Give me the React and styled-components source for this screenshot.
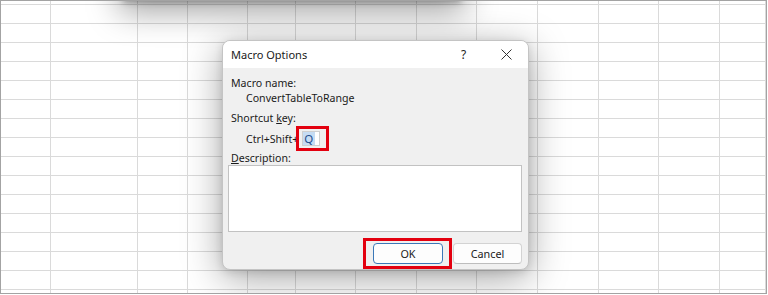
import React from 'react'
import styled, { createGlobalStyle } from 'styled-components'

const GlobalStyle = createGlobalStyle`
  html, body {
    margin: 0;
    padding: 0;
    background: #ffffff;
  }
  body {
    font-family: "Noto Sans", "Open Sans", sans-serif;
  }
`

const COLUMNS = [50, 87, 50, 60, 48, 60, 61, 60, 61, 61, 60, 61]
const ROWS = 17

const Frame = styled.div`
  position: relative;
  width: 767px;
  height: 294px;
  box-sizing: border-box;
  border: 1px solid #a3a3a3;
  overflow: hidden;
  background: #ffffff;
`

const Sheet = styled.div`
  display: grid;
  grid-template-columns: ${COLUMNS.map(w => w + 'px').join(' ')} 1fr;
  grid-template-rows: 4px repeat(${ROWS - 1}, 19px);
`

const Cell = styled.div`
  box-sizing: border-box;
  border-right: 1px solid #dadada;
  border-bottom: 1px solid #dadada;
`

// bottom edge of a window that sits above the visible area, only its shadow shows
const UpperWindow = styled.div`
  position: absolute;
  left: 122px;
  top: -62px;
  width: 338px;
  height: 61px;
  background: #8a8a8a;
  box-shadow: 0 8px 32px 4px rgba(0, 0, 0, 0.36), 0 2px 6px rgba(0, 0, 0, 0.3);
`

const Dialog = styled.div`
  position: absolute;
  left: 221px;
  top: 39px;
  width: 307px;
  height: 230px;
  box-sizing: border-box;
  display: flex;
  flex-direction: column;
  border: 1px solid #c4c4c4;
  border-radius: 8px;
  overflow: hidden;
  background: #f0f0f0;
  box-shadow: 0 8px 38px rgba(0, 0, 0, 0.36), 0 2px 8px rgba(0, 0, 0, 0.12);
  color: #1b1b1b;
  font-size: 10.6px;
`

const TitleBar = styled.div`
  display: flex;
  align-items: center;
  height: 27px;
  padding-left: 8px;
  background: #ffffff;
`

const Title = styled.span`
  font-size: 11px;
  color: #1a1a1a;
`

const TitleButton = styled.div`
  display: flex;
  align-items: center;
  justify-content: center;
  width: 43px;
  height: 27px;
  color: #222;
  font-size: 12px;
  margin-left: ${props => props.$first ? 'auto' : '0'};
`

const Body = styled.div`
  display: flex;
  flex-direction: column;
  flex: 1;
  padding: 0 6px 0 5px;
`

const Label = styled.div`
  line-height: 15px;
  padding-left: ${props => props.$indent ? '18px' : '3px'};
  margin-top: ${props => props.$top || 0}px;
  white-space: nowrap;
`

const DescLabel = styled(Label)`
  line-height: 14px;
`

const ShortcutRow = styled.div`
  display: flex;
  align-items: center;
  height: 25px;
  padding-left: 18px;
`

const RedFrame = styled.div`
  display: flex;
  align-items: ${props => props.$center ? 'center' : 'flex-start'};
  box-sizing: border-box;
  width: ${props => props.$w}px;
  height: ${props => props.$h}px;
  border: 3px solid #e3000f;
  padding: ${props => props.$pad};
  margin-left: ${props => props.$ml || 0}px;
  position: relative;
`

const KeyInput = styled.div`
  box-sizing: border-box;
  width: 18px;
  height: 15px;
  border: 1px solid #cfcfcf;
  background: #ffffff;
  display: flex;
  align-items: center;
`

const Selected = styled.span`
  display: inline-block;
  background: #c6dcf3;
  color: #1d4d8c;
  font-size: 11.5px;
  line-height: 13px;
  padding: 0 2px 0 1px;
`

const DescriptionBox = styled.div`
  box-sizing: border-box;
  height: 67px;
  border: 1px solid #c2c2c2;
  background: #ffffff;
`

const ButtonRow = styled.div`
  display: flex;
  align-items: center;
  justify-content: flex-end;
  margin-top: 6px;
  height: 31px;
`

const Button = styled.div`
  box-sizing: border-box;
  display: flex;
  align-items: center;
  justify-content: center;
  width: ${props => props.$w}px;
  height: 21px;
  border-radius: 4px;
  background: #fdfdfd;
  border: 1px solid ${props => props.$primary ? '#3b78b8' : '#d3d3d3'};
  border-bottom-color: ${props => props.$primary ? '#3b78b8' : '#bdbdbd'};
  margin-left: ${props => props.$ml || 0}px;
  font-size: 10.8px;
  color: #1b1b1b;
`

function CloseIcon() {
  return (
    <svg width="11" height="11" viewBox="0 0 11 11">
      <path d="M0.5 0.5 L10.5 10.5 M10.5 0.5 L0.5 10.5" stroke="#333" strokeWidth="1" fill="none" />
    </svg>
  )
}

export default function App() {
  const cells = []
  for (let r = 0; r < ROWS; r++) {
    for (let c = 0; c <= COLUMNS.length; c++) {
      cells.push(<Cell key={r + '-' + c} />)
    }
  }

  return (
    <>
      <GlobalStyle />
      <Frame>
        <Sheet>{cells}</Sheet>
        <UpperWindow />
        <Dialog>
          <TitleBar>
            <Title>Macro Options</Title>
            <TitleButton $first>?</TitleButton>
            <TitleButton><CloseIcon /></TitleButton>
          </TitleBar>
          <Body>
            <Label $top={8}>Macro name:</Label>
            <Label $indent>ConvertTableToRange</Label>
            <Label $top={5}>Shortcut <u>k</u>ey:</Label>
            <ShortcutRow>
              <span>Ctrl+Shift+</span>
              <RedFrame $w={33} $h={25} $pad="2px 0 0 3px" $ml={-2}>
                <KeyInput>
                  <Selected>Q</Selected>
                </KeyInput>
              </RedFrame>
            </ShortcutRow>
            <DescLabel><u>D</u>escription:</DescLabel>
            <DescriptionBox />
            <ButtonRow>
              <RedFrame $w={89} $h={31} $pad="0 0 0 7px" $center>
                <Button $primary $w={70}>OK</Button>
              </RedFrame>
              <Button $w={69} $ml={1}>Cancel</Button>
            </ButtonRow>
          </Body>
        </Dialog>
      </Frame>
    </>
  )
}
